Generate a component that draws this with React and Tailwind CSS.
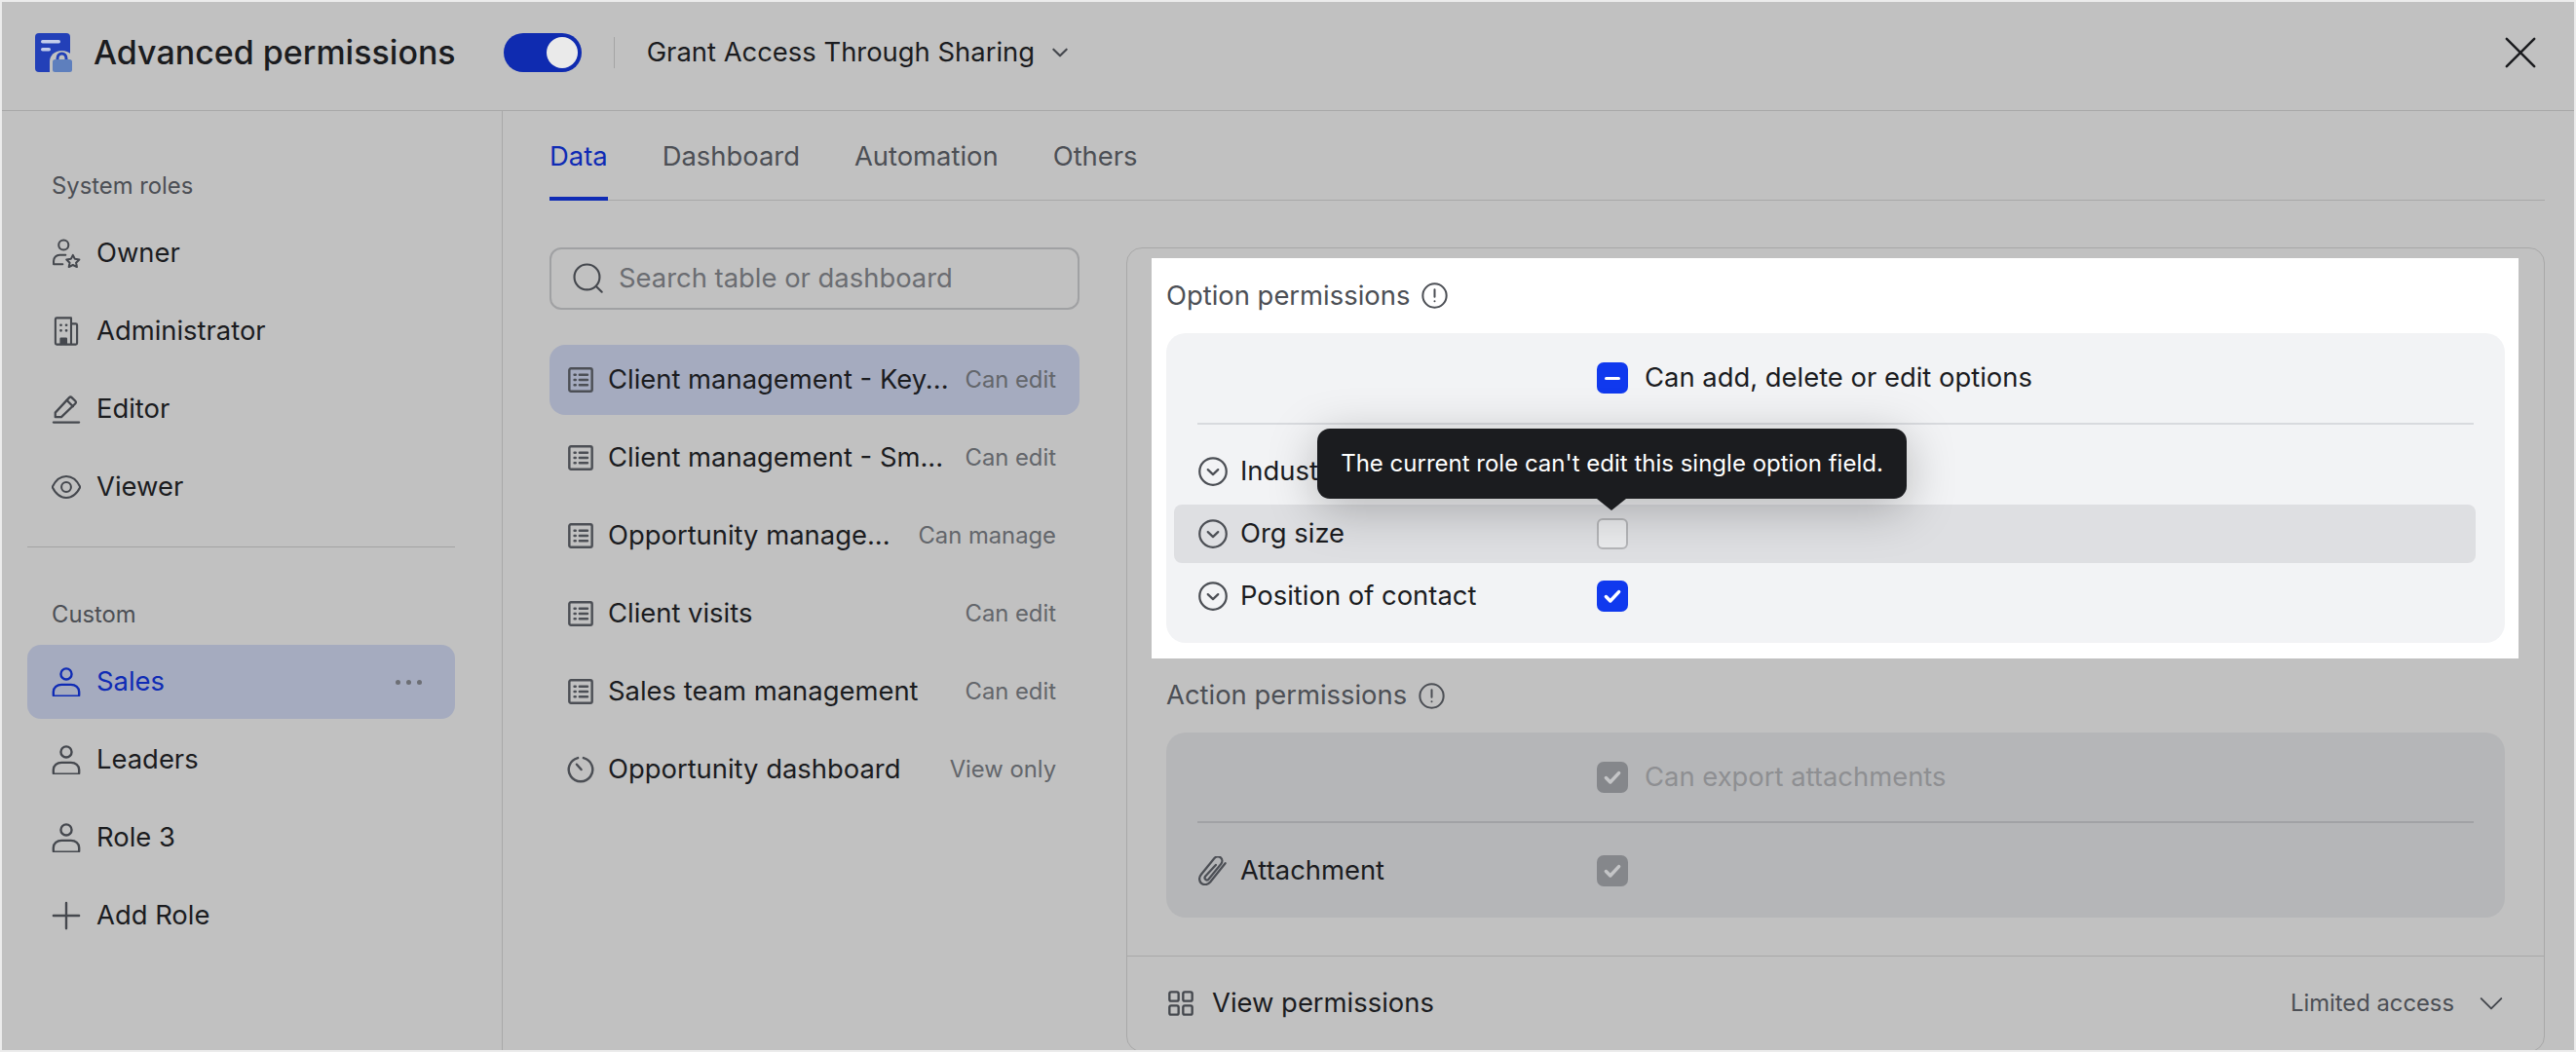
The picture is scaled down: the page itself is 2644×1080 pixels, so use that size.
import { useState } from 'react';

const Icon = ({ className = '', size = 30, children, sw = 2.2, view = '0 0 24 24' }) => (
  <svg
    className={`shrink-0 ${className}`}
    width={size}
    height={size}
    viewBox={view}
    fill="none"
    stroke="currentColor"
    strokeWidth={sw}
    strokeLinecap="round"
    strokeLinejoin="round"
  >
    {children}
  </svg>
);

const OwnerIcon = () => (
  <Icon sw={1.5} view="1.5 1 22 22">
    <circle cx="10.500" cy="5.800" r="3.700" />
    <path d="M12 13.300H7.500a4.500 4.500 0 0 0-4.500 4.500v2.400h6.800" />
    <path d="m17.500 13.400 1.500 2.900 3.300.5-2.400 2.300.6 3.200-3-1.500-3 1.500.6-3.200-2.400-2.300 3.300-.5z" />
  </Icon>
);

const BuildingIcon = () => (
  <Icon sw={1.5} view="1.2 1.2 21.6 21.6">
    <path d="M4 3.200c0-.6.4-1 1-1h10.600v19.600H5c-.6 0-1-.4-1-1zM15.600 6.500H19c.6 0 1 .4 1 1v13.300c0 .6-.4 1-1 1h-3.400" />
    <path d="M8 21.500v-4h4v4" fill="currentColor" />
    <path d="M8 7.500h.1M12 7.500h.1M8 11.500h.1M12 11.500h.1" strokeWidth="1.900" />
  </Icon>
);

const EditIcon = () => (
  <Icon sw={1.800}>
    <path d="M1.500 22.800h21" />
    <path d="M3 18.500v-3.600L14.500 2.500c.6-.6 1.400-.6 2 0l3 2.900c.6.6.6 1.400 0 2L8 18.500z" />
    <path d="m12.500 4.800 5 5" />
  </Icon>
);

const EyeIcon = () => (
  <Icon sw={1.500} view="1 1 22 22">
    <path d="M1.500 12C4 6.800 7.700 4 12 4s8 2.800 10.500 8c-2.500 5.200-6.200 8-10.500 8S4 17.200 1.500 12z" />
    <circle cx="12" cy="12" r="3.600" />
  </Icon>
);

const PersonIcon = () => (
  <Icon sw={1.700} view="1.200 1.200 21.600 21.600">
    <circle cx="12" cy="6.200" r="4" />
    <path d="M2.500 21.800v-2.400c0-3.300 2.700-5.300 6-5.300h7c3.300 0 6 2 6 5.300v2.400c0 .5-.3.700-.8.700H3.300c-.5 0-.8-.2-.8-.7z" />
  </Icon>
);

const PlusIcon = () => (
  <Icon sw={1.900}>
    <path d="M12 1.500v21M1.500 12h21" />
  </Icon>
);

const TableIcon = () => (
  <Icon size={28} sw={2.100}>
    <rect x="2" y="2" width="20" height="20" rx="1.500" />
    <path d="M6.500 7.500h1M11 7.500h7M6.500 12h1M11 12h7M6.500 16.500h1M11 16.500h7" />
  </Icon>
);

const GaugeIcon = () => (
  <Icon size={28} sw={2.100}>
    <path d="M9.500 1.800a10.500 10.500 0 1 0 5 0" />
    <path d="m8.500 7.500 4 4.500" />
  </Icon>
);

const InfoIcon = () => (
  <Icon size={27} sw={1.800}>
    <circle cx="12" cy="12" r="10.800" />
    <path d="M12 6.500v6.500M12 17.200h.01" />
  </Icon>
);

const CircleChevron = () => (
  <Icon size={30} sw={1.800} className="text-[#4c4f55]">
    <circle cx="12" cy="12" r="11" />
    <path d="m7.800 10.500 4.200 4 4.200-4" />
  </Icon>
);

const Checkbox = ({ state, disabled }) => {
  if (state === 'off') {
    return <span className="block w-[32px] h-[32px] rounded-[6px] border-2 border-[#b4b5b8] bg-[#e9eaec]" />;
  }
  return (
    <span className={`flex items-center justify-center w-[32px] h-[32px] rounded-[7px] ${disabled ? 'bg-[#85878b]' : 'bg-[#1039ee]'}`}>
      {state === 'mixed' ? (
        <span className="block w-[16px] h-[3px] rounded-full bg-white" />
      ) : (
        <svg width="22" height="22" viewBox="0 0 20 20" fill="none" stroke={disabled ? '#c4c5c7' : '#fff'} strokeWidth="3.200" strokeLinecap="round" strokeLinejoin="round">
          <path d="m4 10.500 4 4 8-8.500" />
        </svg>
      )}
    </span>
  );
};

const systemRoles = [
  { name: 'Owner', icon: <OwnerIcon /> },
  { name: 'Administrator', icon: <BuildingIcon /> },
  { name: 'Editor', icon: <EditIcon /> },
  { name: 'Viewer', icon: <EyeIcon /> },
];

const customRoles = [
  { name: 'Sales', icon: <PersonIcon />, active: true },
  { name: 'Leaders', icon: <PersonIcon /> },
  { name: 'Role 3', icon: <PersonIcon /> },
  { name: 'Add Role', icon: <PlusIcon /> },
];

const tables = [
  { name: 'Client management - Key...', access: 'Can edit', active: true },
  { name: 'Client management - Sm...', access: 'Can edit' },
  { name: 'Opportunity manage...', access: 'Can manage' },
  { name: 'Client visits', access: 'Can edit' },
  { name: 'Sales team management', access: 'Can edit' },
  { name: 'Opportunity dashboard', access: 'View only', gauge: true },
];

function RoleRow({ role }) {
  return (
    <div className={`flex items-center h-[76px] mb-[4px] pl-[25px] pr-[34px] rounded-[14px] text-[27.4px] ${role.active ? 'bg-[#a5abbf] text-[#0f2bb5]' : 'text-[#1b1c1f]'}`}>
      <span className={role.active ? 'text-[#0f2bb5]' : 'text-[#45484e]'}>{role.icon}</span>
      <span className="ml-[16px] flex-1">{role.name}</span>
      {role.active && (
        <span className="flex gap-[6px]">
          <span className="w-[5px] h-[5px] rounded-full bg-[#6c6e74]" />
          <span className="w-[5px] h-[5px] rounded-full bg-[#6c6e74]" />
          <span className="w-[5px] h-[5px] rounded-full bg-[#6c6e74]" />
        </span>
      )}
    </div>
  );
}

function Sidebar() {
  return (
    <aside className="w-[514px] shrink-0 border-r border-[#a8a8a8] pl-[26px] pr-[48px]">
      <p className="pl-[25px] mt-[62px] h-[30px] leading-[30px] text-[23.800px] text-[#4c4f55]">System roles</p>
      <div className="mt-[16px]">
        {systemRoles.map((role) => (
          <RoleRow key={role.name} role={role} />
        ))}
      </div>
      <div className="h-px bg-[#a4a4a4] mt-[23px]" />
      <p className="pl-[25px] mt-[54px] h-[30px] leading-[30px] text-[23.800px] text-[#4c4f55]">Custom</p>
      <div className="mt-[16px]">
        {customRoles.map((role) => (
          <RoleRow key={role.name} role={role} />
        ))}
      </div>
    </aside>
  );
}

function TableList() {
  return (
    <div className="w-[544px] shrink-0">
      <div className="flex items-center h-[64px] rounded-[12px] border-[2.500px] border-[#a0a1a3] pl-[22px]">
        <Icon size={32} sw={1.400} view="1.500 1.500 21 21" className="text-[#45484e]">
          <circle cx="11" cy="11" r="8.500" />
          <path d="m17.500 17.500 3.500 3.500" />
        </Icon>
        <span className="ml-[15px] text-[27.400px] text-[#6b6d72]">Search table or dashboard</span>
      </div>
      <div className="mt-[36px]">
        {tables.map((t) => (
          <div key={t.name} className={`flex items-center h-[72px] mb-[8px] pl-[18px] pr-[24px] rounded-[16px] ${t.active ? 'bg-[#a5abbf]' : ''}`}>
            <span className="text-[#4c4f55]">{t.gauge ? <GaugeIcon /> : <TableIcon />}</span>
            <span className="ml-[14px] flex-1 whitespace-nowrap text-[27.400px] text-[#1b1c1f]">{t.name}</span>
            <span className="shrink-0 text-[23.800px] text-[#63666b]">{t.access}</span>
          </div>
        ))}
      </div>
    </div>
  );
}

function PermissionRow({ icon, label, state, disabled, active }) {
  return (
    <div className={`flex items-center h-[60px] w-[1336px] ml-[8px] pl-[25px] rounded-[8px] ${active ? 'bg-[#dedfe2]' : ''}`}>
      <span className="text-[#4c4f55]">{icon}</span>
      <span className="ml-[13px] w-[366px] text-[27.400px] text-[#1b1c1f]">{label}</span>
      <Checkbox state={state} disabled={disabled} />
    </div>
  );
}

function Tooltip() {
  return (
    <div className="absolute left-[155px] top-[98px] z-10 flex items-center justify-center w-[605px] h-[72px] rounded-[13px] bg-[#1b1c1f] text-[24px] text-white shadow-[0_10px_50px_rgba(0,0,0,0.26)]">
      The current role can't edit this single option field.
      <span className="absolute left-[287px] top-full w-0 h-0 border-x-[15px] border-x-transparent border-t-[12px] border-t-[#1b1c1f]" />
    </div>
  );
}

function PermissionsPanel() {
  return (
    <section className="flex flex-col flex-1 min-w-0 h-[826px] rounded-[16px] border border-[#a8a8a8]">
      <div className="flex-1 pl-[25px] pr-[26px] pt-[10px]">
        <div className="bg-white pl-[15px] pr-[14px] pb-[16px]">
          <div className="flex items-center h-[77px]">
            <span className="text-[27.400px] text-[#4c4f55]">Option permissions</span>
            <span className="ml-[12px] text-[#4c4f55]"><InfoIcon /></span>
          </div>
          <div className="relative h-[318px] rounded-[20px] bg-[#f2f3f5]">
            <div className="flex items-center h-[92px] pl-[442px]">
              <Checkbox state="mixed" />
              <span className="ml-[17px] text-[27.400px] text-[#1b1c1f]">Can add, delete or edit options</span>
            </div>
            <div className="h-[2px] mx-[32px] bg-[#d8dade]" />
            <div className="mt-[18px] flex flex-col gap-[4px]">
              <PermissionRow icon={<CircleChevron />} label="Industry" state="off" />
              <PermissionRow icon={<CircleChevron />} label="Org size" state="off" active />
              <PermissionRow icon={<CircleChevron />} label="Position of contact" state="on" />
            </div>
            <Tooltip />
          </div>
        </div>
        <div className="pl-[15px] pr-[14px]">
          <div className="flex items-center h-[76px]">
            <span className="text-[27.400px] text-[#4c4f55]">Action permissions</span>
            <span className="ml-[12px] text-[#4c4f55]"><InfoIcon /></span>
          </div>
          <div className="h-[190px] rounded-[20px] bg-[#b5b6b8]">
            <div className="flex items-center h-[91px] pl-[442px]">
              <Checkbox state="on" disabled />
              <span className="ml-[17px] text-[27.400px] text-[#8e8f92]">Can export attachments</span>
            </div>
            <div className="h-[2px] mx-[32px] bg-[#a1a2a5]" />
            <div className="mt-[19px]">
              <PermissionRow
                label="Attachment"
                state="on"
                disabled
                icon={
                  <Icon size={30} sw={1.500}>
                    <g transform="translate(-2.500 -2) scale(1.200)">
                      <path d="M20.500 6.500 10.200 19.300c-1.700 2-4.300 2.300-6 .9s-1.900-4-.2-6L12.800 3.300c1.200-1.500 3.200-1.800 4.500-.7s1.400 3 .2 4.500l-8.200 10.100c-.6.800-1.600.9-2.300.4-.6-.5-.7-1.500-.1-2.300L14 7.600" />
                    </g>
                  </Icon>
                }
              />
            </div>
          </div>
        </div>
      </div>
      <div className="flex items-center h-[98px] shrink-0 border-t border-[#a8a8a8] pb-[2px] pl-[41px] pr-[41px]">
        <Icon size={28} sw={2} className="text-[#45484e]">
          <rect x="2" y="2" width="8" height="8" rx="1.500" />
          <rect x="14" y="2" width="8" height="8" rx="1.500" />
          <rect x="2" y="14" width="8" height="8" rx="1.500" />
          <rect x="14" y="14" width="8" height="8" rx="1.500" />
        </Icon>
        <span className="ml-[18px] flex-1 text-[27.400px] text-[#1b1c1f]">View permissions</span>
        <span className="text-[23.800px] text-[#4c4f55]">Limited access</span>
        <Icon size={26} sw={1.800} className="ml-[25px] text-[#45484e]">
          <path d="m2.500 7.500 9.500 9.500 9.500-9.500" />
        </Icon>
      </div>
    </section>
  );
}

export default function App() {
  const [tab] = useState('Data');

  return (
    <div className="w-[2644px] h-[1080px] overflow-hidden bg-[#ececec] p-[2px] [font-family:Inter,sans-serif]">
      <div className="flex flex-col h-full overflow-hidden bg-[#c1c1c1]">
        <header className="flex items-center h-[112px] shrink-0 border-b border-[#a8a8a8] pb-[8px] pl-[34px] pr-[38px]">
          <svg width="40" height="40" viewBox="0 0 40 40" className="shrink-0">
            <rect x="0" y="0" width="36" height="40" rx="4" fill="#2340b8" />
            <rect x="6" y="7" width="20" height="3.500" rx="1.700" fill="#c4cdea" />
            <rect x="6" y="15" width="10" height="3.500" rx="1.700" fill="#c4cdea" />
            <path d="M15 40V29c0-6 5-11 12.500-11S40 23 40 29v11z" fill="#c1c1c1" />
            <path d="M23 28v-2c0-3 2-5 4.500-5s4.500 2 4.500 5v2" fill="none" stroke="#2340b8" strokeWidth="3" />
            <rect x="18" y="27" width="20" height="13" rx="2.500" fill="#5e7fbd" />
          </svg>
          <h1 className="ml-[20px] text-[34px] font-medium text-[#1b1c1f]">Advanced permissions</h1>
          <div className="ml-[49px] relative w-[80px] h-[40px] rounded-full bg-[#0f2bb0]">
            <span className="absolute right-[4px] top-[4px] w-[32px] h-[32px] rounded-full bg-[#eaeaea]" />
          </div>
          <span className="ml-[33px] w-px h-[32px] bg-[#a4a4a4]" />
          <span className="ml-[33px] text-[27.400px] text-[#1b1c1f]">Grant Access Through Sharing</span>
          <Icon size={20} sw={2.600} className="ml-[16px] text-[#45484e]">
            <path d="m4 8 8 8 8-8" />
          </Icon>
          <Icon size={34} sw={1.800} className="ml-auto text-[#1b1c1f]">
            <path d="m2 2 20 20M22 2 2 22" />
          </Icon>
        </header>
        <div className="flex flex-1 min-h-0">
          <Sidebar />
          <main className="flex-1 min-w-0 pl-[48px] pr-[30px]">
            <nav className="flex h-[92px] gap-[56px] border-b border-[#a8a8a8] text-[27.400px]">
              {['Data', 'Dashboard', 'Automation', 'Others'].map((name) => (
                <span
                  key={name}
                  className={`flex items-center h-[92px] pt-[5px] border-b-4 ${name === tab ? 'border-[#0f2bb5] text-[#0f2bb5]' : 'border-transparent text-[#4c4f55]'}`}
                >
                  {name}
                </span>
              ))}
            </nav>
            <div className="flex items-start gap-[48px] mt-[48px]">
              <TableList />
              <PermissionsPanel />
            </div>
          </main>
        </div>
      </div>
    </div>
  );
}
